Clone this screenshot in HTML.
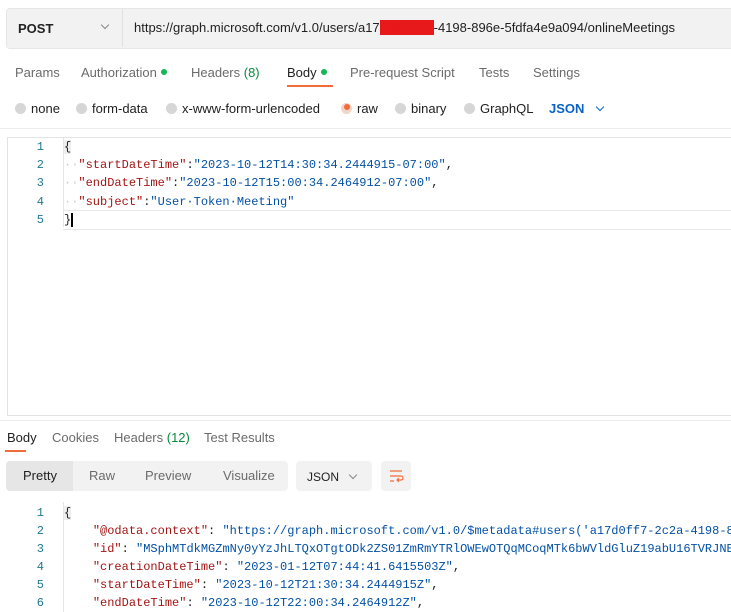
<!DOCTYPE html><html><head><style>
body{margin:0;width:731px;height:608px;overflow:hidden;background:#fff;font-family:"Liberation Sans",sans-serif;font-size:13px;color:#212121;position:relative}
.a{position:absolute;white-space:nowrap}
.mono{font-family:"Liberation Mono",monospace;font-size:12px}
.k{color:#a31515}.s{color:#0451a5}.ln{color:#237893;width:20px;text-align:right}
.dot{display:inline-block;width:6px;height:6px;border-radius:50%;background:#0cbb52;margin-left:4px;vertical-align:2px}
.r{display:inline-block;width:11px;height:11px;border-radius:50%;background:#d6d6d6;vertical-align:-1px;margin-right:5px}
.g{color:#6b6b6b}
.chev{display:inline-block;width:5px;height:5px;border-right:1px solid #888;border-bottom:1px solid #888;transform:rotate(45deg);vertical-align:3px}
</style></head><body>
<div class="a" style="left:6px;top:8px;width:730px;height:39px;background:#f2f2f2;border:1px solid #e6e6e6;border-radius:4px"></div>
<div class="a" style="left:122px;top:9px;width:1px;height:38px;background:#e0e0e0"></div>
<div class="a" style="left:18px;top:21px;font-weight:bold;font-size:13px">POST</div>
<div class="a" style="left:102px;top:19px"><span class="chev"></span></div>
<div class="a" style="left:134px;top:20px;font-size:13px">https://graph.microsoft.com/v1.0/users/a17<span style="background:#e8191a;color:#e8191a">d0ff7-2c2</span>-4198-896e-5fdfa4e9a094/onlineMeetings</div>
<div class="a g" style="left:15px;top:65px">Params</div>
<div class="a g" style="left:81px;top:65px">Authorization<span class="dot"></span></div>
<div class="a g" style="left:191px;top:65px">Headers <span style="color:#0a8a3c">(8)</span></div>
<div class="a" style="left:287px;top:65px">Body<span class="dot"></span></div>
<div class="a" style="left:287px;top:85px;width:46px;height:2px;background:#f26b3a"></div>
<div class="a g" style="left:350px;top:65px">Pre-request Script</div>
<div class="a g" style="left:479px;top:65px">Tests</div>
<div class="a g" style="left:533px;top:65px">Settings</div>
<div class="a" style="left:15px;top:101px"><span class="r"></span>none</div>
<div class="a" style="left:76px;top:101px"><span class="r"></span>form-data</div>
<div class="a" style="left:166px;top:101px"><span class="r"></span>x-www-form-urlencoded</div>
<div class="a" style="left:341px;top:101px"><span class="r" style="background:#f0d5c8"></span></div>
<div class="a" style="left:344px;top:104px;width:6px;height:6px;border-radius:50%;background:#f26b3a"></div>
<div class="a" style="left:357px;top:101px">raw</div>
<div class="a" style="left:395px;top:101px"><span class="r"></span>binary</div>
<div class="a" style="left:464px;top:101px"><span class="r"></span>GraphQL</div>
<div class="a" style="left:549px;top:101px;color:#0b63c4;font-weight:bold">JSON</div>
<div class="a" style="left:597px;top:101px"><span class="chev" style="border-color:#0b63c4"></span></div>
<div class="a" style="left:0;top:128px;width:731px;height:1px;background:#ededed"></div>
<div class="a" style="left:7px;top:137px;width:730px;height:277px;border:1px solid #e3e3e3;border-right:none"></div>
<div class="a" style="left:63px;top:210px;width:670px;height:18px;border-top:1px solid #e8e8e8;border-bottom:1px solid #e8e8e8"></div>
<div class="a" style="left:63px;top:137px;width:1px;height:90px;background:#e4e4e4"></div>
<div class="a mono ln" style="left:24px;top:138px;line-height:18.2px">1<br>2<br>3<br>4<br>5</div>
<div class="a mono" style="left:64px;top:138px;line-height:18.2px"><span style="background:#eee">{</span><br><span style="color:#ccc">··</span><span class="k">"startDateTime"</span>:<span class="s">"2023-10-12T14:30:34.2444915-07:00"</span>,<br><span style="color:#ccc">··</span><span class="k">"endDateTime"</span>:<span class="s">"2023-10-12T15:00:34.2464912-07:00"</span>,<br><span style="color:#ccc">··</span><span class="k">"subject"</span>:<span class="s">"User·Token·Meeting"</span><br><span style="border-right:2px solid #000">}</span></div>
<div class="a" style="left:0;top:420px;width:731px;height:1px;background:#ededed"></div>
<div class="a" style="left:7px;top:430px">Body</div>
<div class="a" style="left:5px;top:450px;width:21px;height:2px;background:#f26b3a"></div>
<div class="a g" style="left:52px;top:430px">Cookies</div>
<div class="a g" style="left:114px;top:430px">Headers <span style="color:#0a8a3c">(12)</span></div>
<div class="a g" style="left:204px;top:430px">Test Results</div>
<div class="a" style="left:6px;top:461px;width:282px;height:30px;background:#f2f2f2;border-radius:4px"></div>
<div class="a" style="left:6px;top:461px;width:67px;height:30px;background:#e6e6e6;border-radius:4px 0 0 4px"></div>
<div class="a" style="left:23px;top:468px">Pretty</div>
<div class="a g" style="left:89px;top:468px">Raw</div>
<div class="a g" style="left:145px;top:468px">Preview</div>
<div class="a g" style="left:223px;top:468px">Visualize</div>
<div class="a" style="left:296px;top:461px;width:76px;height:30px;background:#f2f2f2;border-radius:4px"></div>
<div class="a" style="left:307px;top:470px;font-size:12px">JSON</div>
<div class="a" style="left:350px;top:469px"><span class="chev"></span></div>
<div class="a" style="left:381px;top:461px;width:30px;height:30px;background:#f2f2f2;border-radius:4px"></div>
<svg class="a" style="left:388px;top:468px" width="16" height="16" viewBox="0 0 16 16" fill="none" stroke="#f26b3a" stroke-width="1.2"><path d="M2 3h12M2 8h11a2 2 0 0 1 0 4H9M11 10l-2 2 2 2M2 13h4"/></svg>
<div class="a mono ln" style="left:24px;top:504px;line-height:18px">1<br>2<br>3<br>4<br>5<br>6</div>
<div class="a" style="left:63px;top:502px;width:1px;height:110px;background:#e4e4e4"></div>
<div class="a mono" style="left:64px;top:504px;line-height:18px"><span style="background:#eee">{</span><br>&nbsp;&nbsp;&nbsp;&nbsp;<span class="k">"@odata.context"</span>: <span class="s">"https://graph.microsoft.com/v1.0/$metadata#users('a17d0ff7-2c2a-4198-896e</span><br>&nbsp;&nbsp;&nbsp;&nbsp;<span class="k">"id"</span>: <span class="s">"MSphMTdkMGZmNy0yYzJhLTQxOTgtODk2ZS01ZmRmYTRlOWEwOTQqMCoqMTk6bWVldGluZ19abU16TVRJNE</span><br>&nbsp;&nbsp;&nbsp;&nbsp;<span class="k">"creationDateTime"</span>: <span class="s">"2023-01-12T07:44:41.6415503Z"</span>,<br>&nbsp;&nbsp;&nbsp;&nbsp;<span class="k">"startDateTime"</span>: <span class="s">"2023-10-12T21:30:34.2444915Z"</span>,<br>&nbsp;&nbsp;&nbsp;&nbsp;<span class="k">"endDateTime"</span>: <span class="s">"2023-10-12T22:00:34.2464912Z"</span>,</div>
</body></html>
